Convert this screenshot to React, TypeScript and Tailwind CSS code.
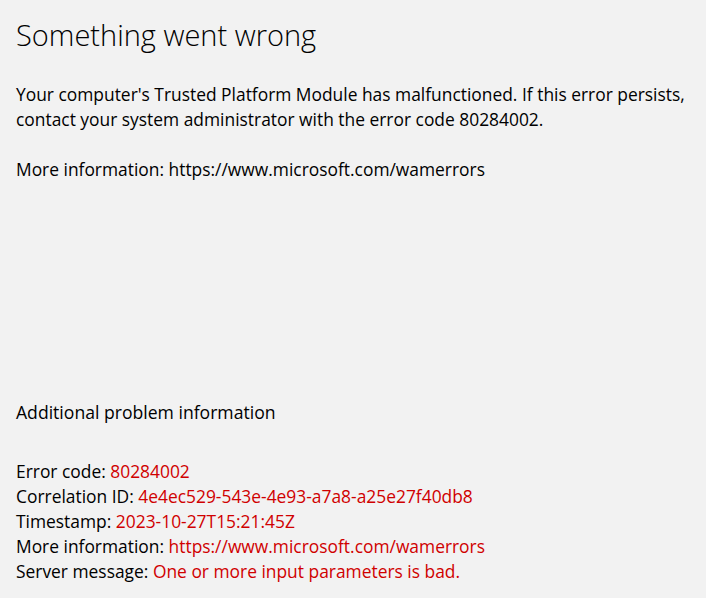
import React from "react";

function Field({ label, value }: { label: string; value: string }) {
  return (
    <div className="whitespace-nowrap">
      {label} <span className="text-[#d00000]">{value}</span>
    </div>
  );
}

export default function App() {
  return (
    <div className="flex h-[598px] w-[706px] flex-col bg-[#f2f2f2] px-4 pb-[14px] pt-[15px] font-['Open_Sans',sans-serif] text-[17.4px] leading-[25px] text-black">
      <h1 className="text-[29px] font-light leading-[40px]">Something went wrong</h1>
      <div className="mt-[27px]">
        <p className="whitespace-nowrap">
          Your computer's Trusted Platform Module has malfunctioned. If this error persists,
          <br />
          contact your system administrator with the error code 80284002.
        </p>
        <p className="mt-[25px]">More information: https://www.microsoft.com/wamerrors</p>
      </div>
      <div className="mt-auto">
        <h2 className="text-[17.6px] leading-[25px]">Additional problem information</h2>
        <div className="mt-[34px]">
          <Field label="Error code:" value="80284002" />
          <Field label="Correlation ID:" value="4e4ec529-543e-4e93-a7a8-a25e27f40db8" />
          <Field label="Timestamp:" value="2023-10-27T15:21:45Z" />
          <Field label="More information:" value="https://www.microsoft.com/wamerrors" />
          <Field label="Server message:" value="One or more input parameters is bad." />
        </div>
      </div>
    </div>
  );
}
